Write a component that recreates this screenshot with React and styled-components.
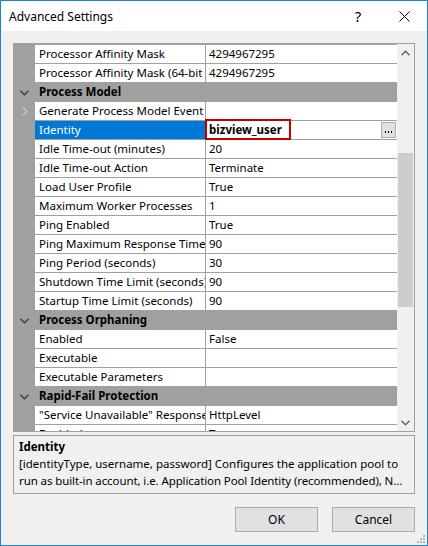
import React from 'react';
import styled, { createGlobalStyle } from 'styled-components';

const GlobalStyle = createGlobalStyle`
  html, body {
    margin: 0;
    padding: 0;
    background: #ffffff;
  }
  body {
    font-family: "Noto Sans", "Segoe UI", sans-serif;
    font-size: 11.5px;
    color: #000;
  }
`;

const LINE = '#a0a0a0';

const Window = styled.div`
  position: relative;
  width: 428px;
  height: 546px;
  box-sizing: border-box;
  border: 1px solid #1883d7;
  display: flex;
  flex-direction: column;
  background: #f0f0f0;
`;

const TitleBar = styled.div`
  height: 30px;
  flex-shrink: 0;
  display: flex;
  align-items: center;
  background: #fff;
`;

const Title = styled.div`
  flex: 1;
  padding-left: 8px;
  font-size: 12px;
`;

const TitleButton = styled.div`
  width: 46px;
  height: 30px;
  display: flex;
  align-items: center;
  justify-content: center;
  font-size: 15px;
`;

const Body = styled.div`
  flex: 1;
  display: flex;
  flex-direction: column;
  padding: 12px 12px 0 12px;
`;

const GridFrame = styled.div`
  height: 389px;
  box-sizing: border-box;
  border: 1px solid ${LINE};
  display: flex;
  flex-shrink: 0;
`;

const Rows = styled.div`
  flex: 1;
  overflow: hidden;
  background: #fff;
  border-top: 1px solid ${LINE};
`;

const Row = styled.div`
  display: flex;
  height: 19px;
`;

const Margin = styled.div`
  width: 21px;
  flex-shrink: 0;
  background: ${LINE};
  display: flex;
  align-items: center;
  justify-content: center;
`;

const NameCell = styled.div`
  width: 171px;
  flex-shrink: 0;
  box-sizing: border-box;
  padding-left: 4px;
  line-height: 18px;
  white-space: nowrap;
  overflow: hidden;
  text-overflow: clip;
  border-right: 1px solid ${LINE};
  border-bottom: 1px solid ${LINE};
  background: ${p => (p.$selected ? '#0078d7' : '#fff')};
  color: ${p => (p.$selected ? '#fff' : '#000')};
`;

const ValueCell = styled.div`
  position: relative;
  flex: 1;
  display: flex;
  align-items: center;
  box-sizing: border-box;
  padding-left: 3px;
  line-height: 18px;
  white-space: nowrap;
  border-bottom: 1px solid ${LINE};
  font-weight: ${p => (p.$bold ? 700 : 400)};
`;

const CategoryRow = styled.div`
  display: flex;
  height: 19px;
  background: ${LINE};
  font-weight: 700;
  line-height: 18px;
`;

const CategoryName = styled.div`
  padding-left: 4px;
`;

const Highlight = styled.div`
  position: absolute;
  left: -1px;
  top: -2px;
  width: 86px;
  height: 21px;
  box-sizing: border-box;
  border: 2px solid #c00000;
  pointer-events: none;
`;

const EllipsisButton = styled.div`
  margin-left: auto;
  margin-right: 1px;
  width: 15px;
  height: 16px;
  box-sizing: border-box;
  border: 1px solid #adadad;
  background: #e1e1e1;
  display: flex;
  align-items: flex-end;
  justify-content: center;
  gap: 2px;
  padding-bottom: 4px;
`;

const Dot = styled.span`
  width: 1px;
  height: 2px;
  background: #000;
`;

const Scrollbar = styled.div`
  width: 17px;
  flex-shrink: 0;
  display: flex;
  flex-direction: column;
  background: #f0f0f0;
`;

const ScrollArrow = styled.div`
  height: 17px;
  display: flex;
  align-items: center;
  justify-content: center;
`;

const Track = styled.div`
  flex: 1;
  display: flex;
  flex-direction: column;
  align-items: center;
`;

const Thumb = styled.div`
  width: 15px;
  background: #cdcdcd;
`;

const Description = styled.div`
  margin-top: 3px;
  height: 59px;
  box-sizing: border-box;
  border: 1px solid ${LINE};
  padding: 2px 6px 0 5px;
  line-height: 17px;
`;

const DescTitle = styled.div`
  font-weight: 700;
`;

const DescLine = styled.div`
  white-space: nowrap;
  overflow: hidden;
  text-overflow: ellipsis;
  letter-spacing: ${p => (p.$tight ? '-0.1px' : '0')};
`;

const ButtonRow = styled.div`
  margin-top: 13px;
  display: flex;
  justify-content: flex-end;
  gap: 14px;
`;

const Button = styled.div`
  width: 83px;
  height: 25px;
  box-sizing: border-box;
  border: 1px solid #adadad;
  background: #e1e1e1;
  display: flex;
  align-items: center;
  justify-content: center;
  font-size: 12px;
`;

const Grip = styled.svg`
  position: absolute;
  right: 1px;
  bottom: 1px;
`;

const ChevronDown = ({ color = '#3c3c3c' }) => (
  <svg width="9" height="6" viewBox="0 0 9 6">
    <polyline points="0.5,0.8 4.5,4.8 8.5,0.8" fill="none" stroke={color} strokeWidth="1.4" />
  </svg>
);

const ChevronUp = ({ color = '#606060' }) => (
  <svg width="9" height="6" viewBox="0 0 9 6">
    <polyline points="0.5,5.2 4.5,1.2 8.5,5.2" fill="none" stroke={color} strokeWidth="1.4" />
  </svg>
);

const ChevronRight = () => (
  <svg width="6" height="9" viewBox="0 0 6 9">
    <polyline points="0.8,0.5 4.8,4.5 0.8,8.5" fill="none" stroke="#c8c8c8" strokeWidth="1.4" />
  </svg>
);

const items = [
  { name: 'Processor Affinity Mask', value: '4294967295' },
  { name: 'Processor Affinity Mask (64-bit option)', value: '4294967295' },
  { category: 'Process Model' },
  { name: 'Generate Process Model Event Log Entry', value: '', expandable: true },
  { name: 'Identity', value: 'bizview_user', selected: true },
  { name: 'Idle Time-out (minutes)', value: '20' },
  { name: 'Idle Time-out Action', value: 'Terminate' },
  { name: 'Load User Profile', value: 'True' },
  { name: 'Maximum Worker Processes', value: '1' },
  { name: 'Ping Enabled', value: 'True' },
  { name: 'Ping Maximum Response Time (seconds)', value: '90' },
  { name: 'Ping Period (seconds)', value: '30' },
  { name: 'Shutdown Time Limit (seconds)', value: '90' },
  { name: 'Startup Time Limit (seconds)', value: '90' },
  { category: 'Process Orphaning' },
  { name: 'Enabled', value: 'False' },
  { name: 'Executable', value: '' },
  { name: 'Executable Parameters', value: '' },
  { category: 'Rapid-Fail Protection' },
  { name: '"Service Unavailable" Response Type', value: 'HttpLevel' },
  { name: 'Enabled', value: 'True' },
];

function PropertyRow({ item }) {
  if (item.category) {
    return (
      <CategoryRow>
        <Margin>
          <ChevronDown />
        </Margin>
        <CategoryName>{item.category}</CategoryName>
      </CategoryRow>
    );
  }
  return (
    <Row>
      <Margin>{item.expandable && <ChevronRight />}</Margin>
      <NameCell $selected={item.selected}>{item.name}</NameCell>
      <ValueCell $bold={item.selected}>
        {item.value}
        {item.selected && (
          <>
            <EllipsisButton title="...">
              <Dot />
              <Dot />
              <Dot />
            </EllipsisButton>
            <Highlight />
          </>
        )}
      </ValueCell>
    </Row>
  );
}

export default function App() {
  return (
    <>
      <GlobalStyle />
      <Window>
        <TitleBar>
          <Title>Advanced Settings</Title>
          <TitleButton>?</TitleButton>
          <TitleButton>
            <svg width="11" height="11" viewBox="0 0 11 11">
              <path d="M0.5 0.5 L10.5 10.5 M10.5 0.5 L0.5 10.5" stroke="#000" strokeWidth="1" />
            </svg>
          </TitleButton>
        </TitleBar>
        <Body>
          <GridFrame>
            <Rows>
              {items.map((item, i) => (
                <PropertyRow key={i} item={item} />
              ))}
            </Rows>
            <Scrollbar>
              <ScrollArrow>
                <ChevronUp />
              </ScrollArrow>
              <Track>
                <Thumb style={{ marginTop: 92, height: 154 }} />
              </Track>
              <ScrollArrow>
                <ChevronDown color="#606060" />
              </ScrollArrow>
            </Scrollbar>
          </GridFrame>
          <Description>
            <DescTitle>Identity</DescTitle>
            <DescLine>
              [identityType, username, password] Configures the application pool to
            </DescLine>
            <DescLine $tight>
              run as built-in account, i.e. Application Pool Identity (recommended), Network Service, Local System, Local Service, or as a specific user identity.
            </DescLine>
          </Description>
          <ButtonRow>
            <Button>OK</Button>
            <Button>Cancel</Button>
          </ButtonRow>
        </Body>
        <Grip width="9" height="9" viewBox="0 0 9 9">
          <g fill="#b8b8b8">
            <rect x="6" y="0" width="2" height="2" />
            <rect x="3" y="3" width="2" height="2" />
            <rect x="6" y="3" width="2" height="2" />
            <rect x="0" y="6" width="2" height="2" />
            <rect x="3" y="6" width="2" height="2" />
            <rect x="6" y="6" width="2" height="2" />
          </g>
        </Grip>
      </Window>
    </>
  );
}
